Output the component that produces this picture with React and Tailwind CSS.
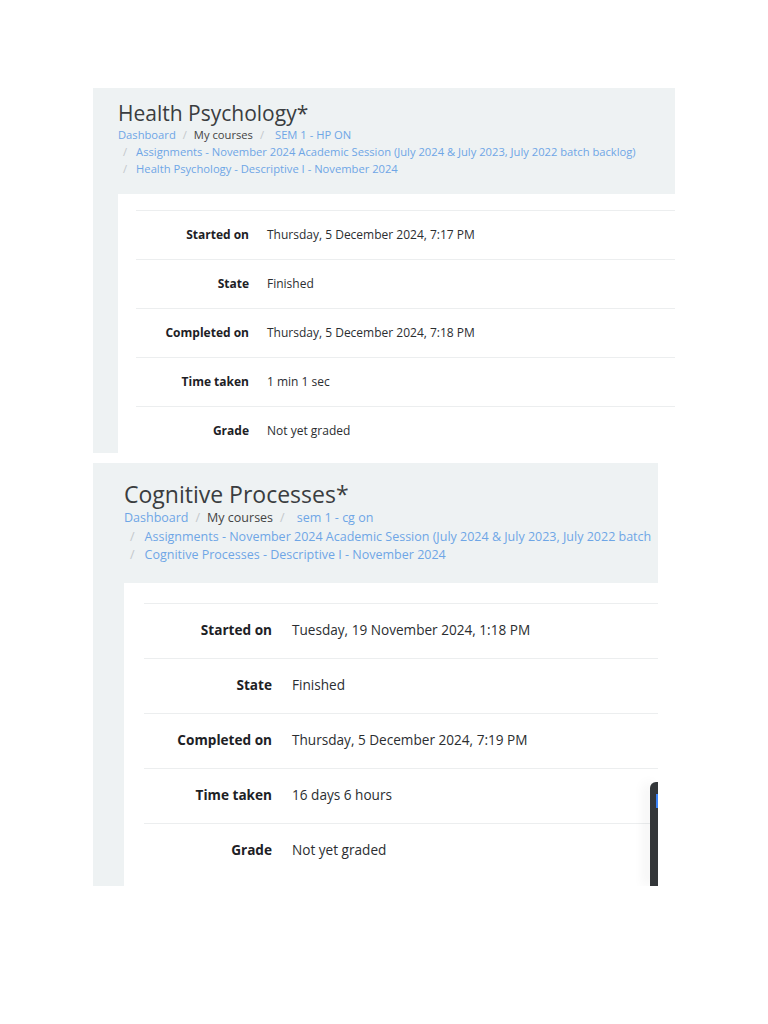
const font = { fontFamily: '"Open Sans", "Noto Sans", sans-serif' };

const first = {
  title: "Health Psychology*",
  course: "SEM 1 - HP ON",
  section: "Assignments - November 2024 Academic Session (July 2024 & July 2023, July 2022 batch backlog)",
  activity: "Health Psychology - Descriptive I - November 2024",
  rows: [
    ["Started on", "Thursday, 5 December 2024, 7:17 PM"],
    ["State", "Finished"],
    ["Completed on", "Thursday, 5 December 2024, 7:18 PM"],
    ["Time taken", "1 min 1 sec"],
    ["Grade", "Not yet graded"],
  ],
};

const second = {
  title: "Cognitive Processes*",
  course: "sem 1 - cg on",
  section: "Assignments - November 2024 Academic Session (July 2024 & July 2023, July 2022 batch",
  activity: "Cognitive Processes - Descriptive I - November 2024",
  rows: [
    ["Started on", "Tuesday, 19 November 2024, 1:18 PM"],
    ["State", "Finished"],
    ["Completed on", "Thursday, 5 December 2024, 7:19 PM"],
    ["Time taken", "16 days 6 hours"],
    ["Grade", "Not yet graded"],
  ],
};

const Sep = () => <span className="text-[#c4c8cc] px-[7px]">/</span>;

export default function App() {
  return (
    <div className="min-h-[1024px] w-[768px] bg-white pt-[88px]" style={font}>
      {/* first screenshot */}
      <div className="ml-[93px] w-[582px] h-[365px] bg-[#eef2f3] overflow-hidden flex flex-col">
        <div className="pl-[25px] pt-[12px] whitespace-nowrap">
          <h1 className="text-[21px] leading-[26px] text-[#3a3d40]">{first.title}</h1>
          <div className="text-[11.2px] leading-[17px] text-[#6ea6e6]">
            <div>
              Dashboard<Sep /><span className="text-[#444]">My courses</span><Sep />
              <span className="pl-[4px]">{first.course}</span>
            </div>
            <div>
              <span className="text-[#c4c8cc] pl-[5px] pr-[9px]">/</span>
              {first.section}
            </div>
            <div>
              <span className="text-[#c4c8cc] pl-[5px] pr-[9px]">/</span>
              {first.activity}
            </div>
          </div>
        </div>
        <div className="ml-[25px] mt-[17px] flex-1 bg-white pl-[18px] pt-[16px]">
          {first.rows.map(([k, v]) => (
            <div key={k} className="flex items-center h-[49px] border-t border-[#eceeef] text-[12px]">
              <div className="w-[113px] text-right font-bold text-[#1d2125]">{k}</div>
              <div className="pl-[18px] text-[#2b2e31]">{v}</div>
            </div>
          ))}
        </div>
      </div>

      {/* second screenshot */}
      <div className="relative mt-[10px] ml-[93px] w-[565px] h-[423px] bg-[#eef2f3] overflow-hidden flex flex-col">
        <div className="pl-[31px] pt-[17px] whitespace-nowrap">
          <h1 className="text-[23px] leading-[29px] text-[#3a3d40]">{second.title}</h1>
          <div className="text-[12.5px] leading-[18.5px] text-[#6ea6e6]">
            <div>
              Dashboard<Sep /><span className="text-[#444]">My courses</span><Sep />
              <span className="pl-[5px]">{second.course}</span>
            </div>
            <div>
              <span className="text-[#c4c8cc] pl-[6px] pr-[10px]">/</span>
              {second.section}
            </div>
            <div>
              <span className="text-[#c4c8cc] pl-[6px] pr-[10px]">/</span>
              {second.activity}
            </div>
          </div>
        </div>
        <div className="ml-[31px] mt-[18px] flex-1 bg-white pl-[20px] pt-[20px]">
          {second.rows.map(([k, v]) => (
            <div key={k} className="flex items-center h-[55px] border-t border-[#eceeef] text-[13.6px]">
              <div className="w-[128px] text-right font-bold text-[#1d2125]">{k}</div>
              <div className="pl-[20px] text-[#2b2e31]">{v}</div>
            </div>
          ))}
        </div>
        <div className="absolute right-0 top-[319px] bottom-0 w-[8px] bg-[#333639] rounded-tl-[6px] shadow-[-6px_0_12px_rgba(0,0,0,0.06)]">
          <div className="mt-[12px] ml-[6px] w-[2px] h-[14px] bg-[#3b82f6]" />
        </div>
      </div>
    </div>
  );
}
